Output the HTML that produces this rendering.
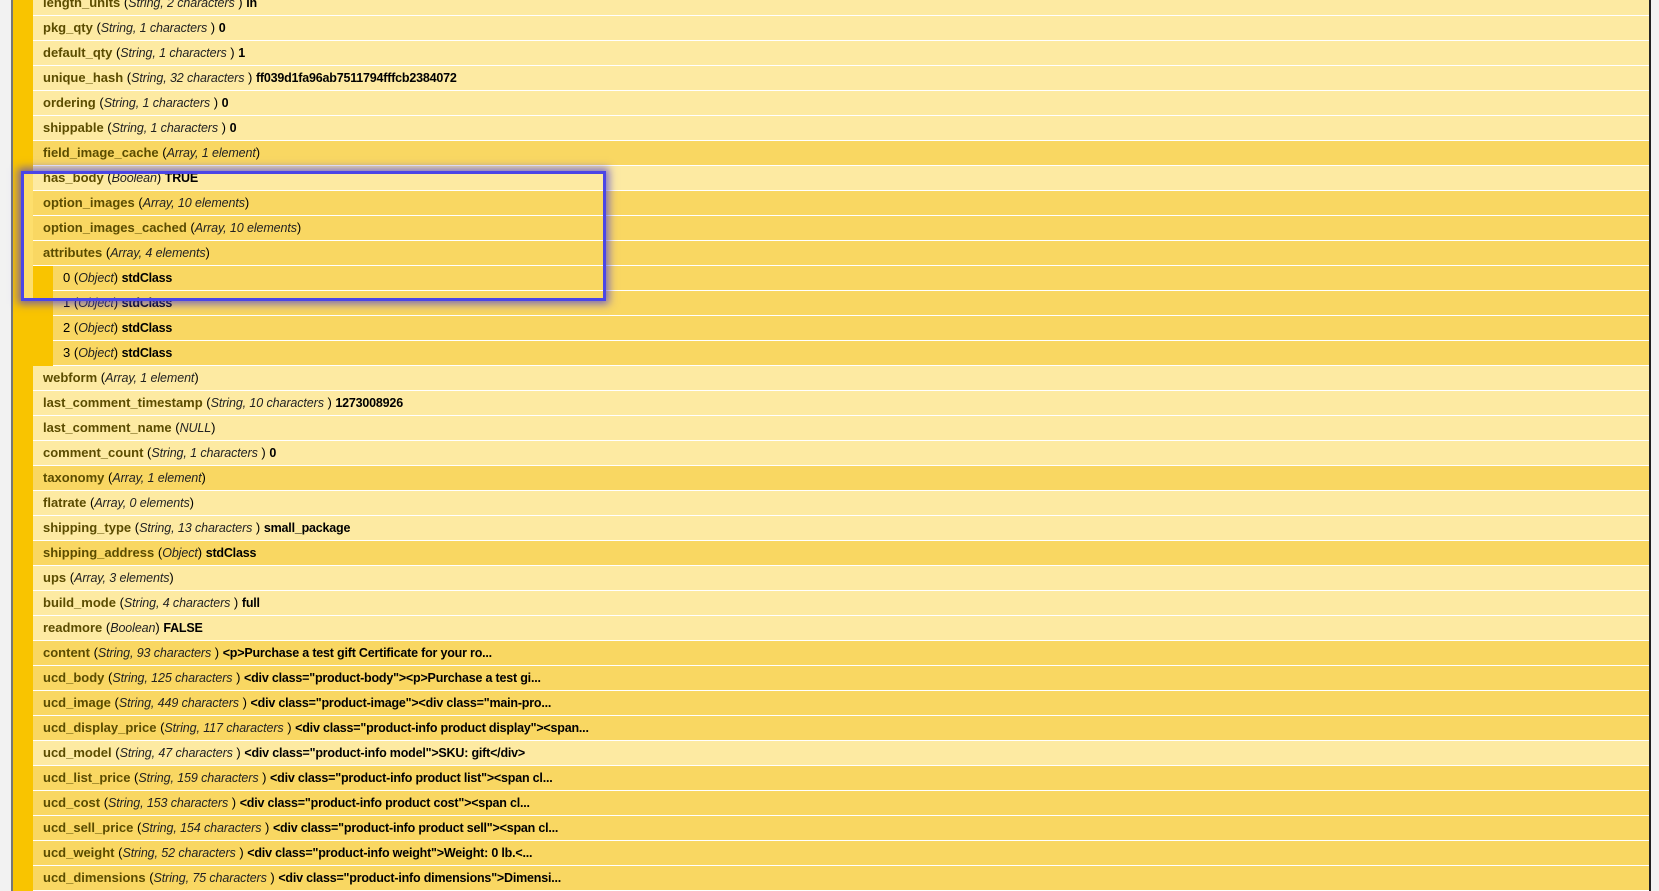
<!DOCTYPE html><html><head><style>
body{margin:0;width:1659px;height:874px;overflow:hidden;background:#f2f2f2;font-family:"Liberation Sans",Arial,sans-serif;font-size:13px;position:relative}
#wrap{position:absolute;left:11px;top:-9px;width:1636px;border-left:2px solid #777;border-right:2px solid #222;background:#fff}
.r{position:relative;height:24px;border-bottom:1px solid #fff;background:#fdeaa2;margin-left:20px;line-height:24px;padding-left:10px;white-space:nowrap;color:#000}
#wrap:before{content:"";position:absolute;left:0;top:0;bottom:0;width:20px;background:#f9c400}
.d{background:#f9d762}
.n{margin-left:40px}
.n:before{content:"";position:absolute;left:-20px;top:0;width:20px;height:25px;background:#f9c400}
.k{font-weight:bold;color:#5b4c00}
.n .k{color:#000;font-weight:normal}
i{color:#222;font-size:12.5px;letter-spacing:-0.1px}
b{color:#000;font-size:12.5px;letter-spacing:-0.2px}
#hl{position:absolute;left:21px;top:171px;width:579px;height:124px;border:3px solid #4b46e6;box-shadow:0 0 8px 3px rgba(70,60,220,.7);}
#hl:before{content:"";position:absolute;left:0;top:0;width:9px;height:100%;background:rgba(255,240,180,.6)}
</style></head><body>
<div id="wrap">
<div class="r"><span class="k">length_units</span> (<i>String, 2 characters</i> ) <b>in</b></div>
<div class="r"><span class="k">pkg_qty</span> (<i>String, 1 characters</i> ) <b>0</b></div>
<div class="r"><span class="k">default_qty</span> (<i>String, 1 characters</i> ) <b>1</b></div>
<div class="r"><span class="k">unique_hash</span> (<i>String, 32 characters</i> ) <b>ff039d1fa96ab7511794fffcb2384072</b></div>
<div class="r"><span class="k">ordering</span> (<i>String, 1 characters</i> ) <b>0</b></div>
<div class="r"><span class="k">shippable</span> (<i>String, 1 characters</i> ) <b>0</b></div>
<div class="r d"><span class="k">field_image_cache</span> (<i>Array, 1 element</i>)</div>
<div class="r"><span class="k">has_body</span> (<i>Boolean</i>) <b>TRUE</b></div>
<div class="r d"><span class="k">option_images</span> (<i>Array, 10 elements</i>)</div>
<div class="r d"><span class="k">option_images_cached</span> (<i>Array, 10 elements</i>)</div>
<div class="r d"><span class="k">attributes</span> (<i>Array, 4 elements</i>)</div>
<div class="r d n"><span class="k">0</span> (<i>Object</i>) <b>stdClass</b></div>
<div class="r d n"><span class="k">1</span> (<i>Object</i>) <b>stdClass</b></div>
<div class="r d n"><span class="k">2</span> (<i>Object</i>) <b>stdClass</b></div>
<div class="r d n"><span class="k">3</span> (<i>Object</i>) <b>stdClass</b></div>
<div class="r"><span class="k">webform</span> (<i>Array, 1 element</i>)</div>
<div class="r"><span class="k">last_comment_timestamp</span> (<i>String, 10 characters</i> ) <b>1273008926</b></div>
<div class="r"><span class="k">last_comment_name</span> (<i>NULL</i>)</div>
<div class="r"><span class="k">comment_count</span> (<i>String, 1 characters</i> ) <b>0</b></div>
<div class="r d"><span class="k">taxonomy</span> (<i>Array, 1 element</i>)</div>
<div class="r"><span class="k">flatrate</span> (<i>Array, 0 elements</i>)</div>
<div class="r"><span class="k">shipping_type</span> (<i>String, 13 characters</i> ) <b>small_package</b></div>
<div class="r d"><span class="k">shipping_address</span> (<i>Object</i>) <b>stdClass</b></div>
<div class="r"><span class="k">ups</span> (<i>Array, 3 elements</i>)</div>
<div class="r"><span class="k">build_mode</span> (<i>String, 4 characters</i> ) <b>full</b></div>
<div class="r"><span class="k">readmore</span> (<i>Boolean</i>) <b>FALSE</b></div>
<div class="r d"><span class="k">content</span> (<i>String, 93 characters</i> ) <b>&lt;p&gt;Purchase a test gift Certificate for your ro...</b></div>
<div class="r d"><span class="k">ucd_body</span> (<i>String, 125 characters</i> ) <b>&lt;div class="product-body"&gt;&lt;p&gt;Purchase a test gi...</b></div>
<div class="r d"><span class="k">ucd_image</span> (<i>String, 449 characters</i> ) <b>&lt;div class="product-image"&gt;&lt;div class="main-pro...</b></div>
<div class="r d"><span class="k">ucd_display_price</span> (<i>String, 117 characters</i> ) <b>&lt;div class="product-info product display"&gt;&lt;span...</b></div>
<div class="r"><span class="k">ucd_model</span> (<i>String, 47 characters</i> ) <b>&lt;div class="product-info model"&gt;SKU: gift&lt;/div&gt;</b></div>
<div class="r d"><span class="k">ucd_list_price</span> (<i>String, 159 characters</i> ) <b>&lt;div class="product-info product list"&gt;&lt;span cl...</b></div>
<div class="r d"><span class="k">ucd_cost</span> (<i>String, 153 characters</i> ) <b>&lt;div class="product-info product cost"&gt;&lt;span cl...</b></div>
<div class="r d"><span class="k">ucd_sell_price</span> (<i>String, 154 characters</i> ) <b>&lt;div class="product-info product sell"&gt;&lt;span cl...</b></div>
<div class="r d"><span class="k">ucd_weight</span> (<i>String, 52 characters</i> ) <b>&lt;div class="product-info weight"&gt;Weight: 0 lb.&lt;...</b></div>
<div class="r d"><span class="k">ucd_dimensions</span> (<i>String, 75 characters</i> ) <b>&lt;div class="product-info dimensions"&gt;Dimensi...</b></div>
</div>
<div id="hl"></div>
</body></html>
